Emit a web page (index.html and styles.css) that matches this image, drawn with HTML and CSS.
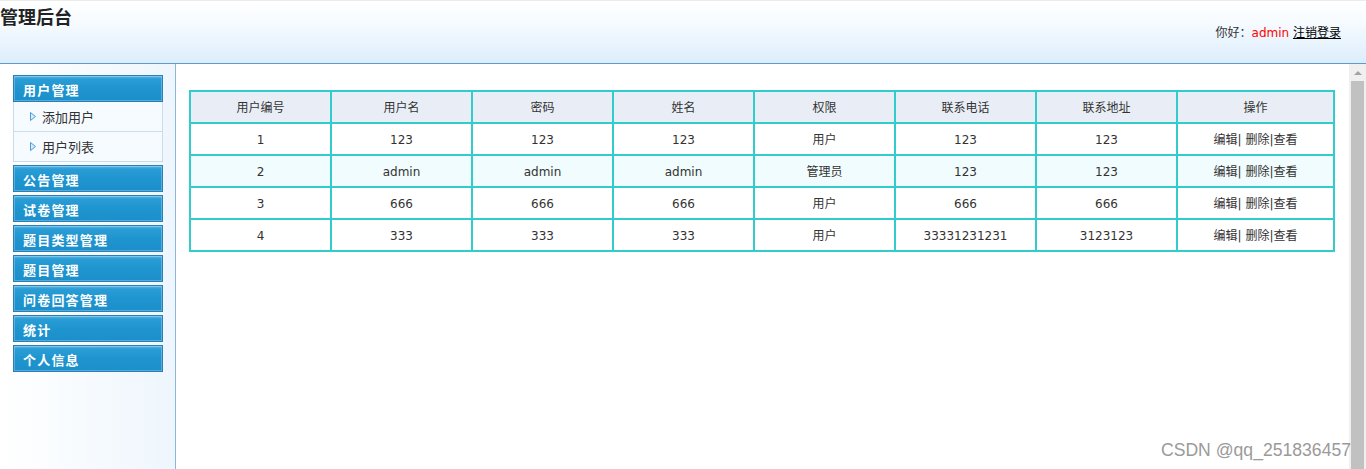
FILE: index.html
```html
<!DOCTYPE html>
<html lang="zh-CN">
<head>
    <meta charset="UTF-8">
    <title>管理后台</title>
    <link rel="stylesheet" href="styles.css">
</head>
<body>
    <div class="top">
        <h1 class="logo">管理后台</h1>
        <div class="user-info">你好：<span class="user-name">admin</span> <a href="#" class="logout">注销登录</a></div>
    </div>

    <div class="main">
        <div class="left">
            <div class="menu-title">用户管理</div>
            <ul class="sub-menu">
                <li><svg width="6" height="9" viewBox="0 0 6 9"><polygon points="0.5,0.5 5.5,4.5 0.5,8.5" fill="#d6ecfa" stroke="#4a9fd8"/></svg>添加用户</li>
                <li><svg width="6" height="9" viewBox="0 0 6 9"><polygon points="0.5,0.5 5.5,4.5 0.5,8.5" fill="#d6ecfa" stroke="#4a9fd8"/></svg>用户列表</li>
            </ul>
            <div class="menu-title">公告管理</div>
            <div class="menu-title">试卷管理</div>
            <div class="menu-title">题目类型管理</div>
            <div class="menu-title">题目管理</div>
            <div class="menu-title">问卷回答管理</div>
            <div class="menu-title">统计</div>
            <div class="menu-title">个人信息</div>
        </div>

        <div class="right">
            <div class="content">
                <table class="list">
                    <tr>
                        <th>用户编号</th>
                        <th>用户名</th>
                        <th>密码</th>
                        <th>姓名</th>
                        <th>权限</th>
                        <th>联系电话</th>
                        <th>联系地址</th>
                        <th class="op">操作</th>
                    </tr>
                    <tr>
                        <td>1</td><td>123</td><td>123</td><td>123</td><td>用户</td><td>123</td><td>123</td>
                        <td>编辑| 删除|查看</td>
                    </tr>
                    <tr class="alt">
                        <td>2</td><td>admin</td><td>admin</td><td>admin</td><td>管理员</td><td>123</td><td>123</td>
                        <td>编辑| 删除|查看</td>
                    </tr>
                    <tr>
                        <td>3</td><td>666</td><td>666</td><td>666</td><td>用户</td><td>666</td><td>666</td>
                        <td>编辑| 删除|查看</td>
                    </tr>
                    <tr>
                        <td>4</td><td>333</td><td>333</td><td>333</td><td>用户</td><td>33331231231</td><td>3123123</td>
                        <td>编辑| 删除|查看</td>
                    </tr>
                </table>
            </div>
            <div class="scrollbar">
                <div class="scroll-up"></div>
                <div class="scroll-thumb"></div>
            </div>
        </div>
    </div>

    <div class="watermark">CSDN @qq_251836457</div>
</body>
</html>
```

FILE: styles.css
```css
body {
    margin: 0;
    padding: 0;
    height: 100vh;
    display: flex;
    flex-direction: column;
    overflow: hidden;
    font-family: "DejaVu Sans", "Noto Sans CJK SC", sans-serif;
    font-size: 12px;
    color: #333;
}

.top {
    height: 62px;
    flex: none;
    border-top: 1px solid #ececec;
    border-bottom: 1px solid #5b9bd1;
    background: linear-gradient(#ffffff 0%, #f6fbff 35%, #dcedfc 100%);
    position: relative;
}

.logo {
    margin: 0;
    padding-top: 3px;
    font-family: "Noto Sans CJK SC", sans-serif;
    font-size: 18px;
    font-weight: bold;
    line-height: 24px;
    color: #222;
}

.user-info {
    position: absolute;
    right: 25px;
    top: 24px;
    font-size: 12px;
    line-height: 16px;
    color: #333;
}

.user-name {
    color: #ff0000;
}

.logout {
    color: #000;
}

.main {
    flex: 1;
    display: flex;
    min-height: 0;
}

.left {
    width: 176px;
    flex: none;
    box-sizing: border-box;
    border-right: 1px solid #8fb6d6;
    background: linear-gradient(to right, #ffffff, #eef6fd);
    padding: 11px 0 0 13px;
}

.menu-title {
    width: 150px;
    height: 27px;
    box-sizing: border-box;
    border: 1px solid #2a7fb8;
    background: linear-gradient(#5cb8e6 0, #2a9dd6 3px, #1f95cf 12px, #1b8fcb 100%);
    box-shadow: inset 0 0 0 1px rgba(255, 255, 255, 0.25);
    color: #fff;
    font-family: "Noto Sans CJK SC", sans-serif;
    font-weight: bold;
    font-size: 13px;
    line-height: 27px;
    padding-left: 9px;
    letter-spacing: 1.2px;
    margin-bottom: 3px;
}

.sub-menu {
    list-style: none;
    margin: -3px 0 3px 0;
    padding: 0;
    width: 150px;
    box-sizing: border-box;
    border: 1px solid #c9dbe8;
    border-top: none;
    background: #f6fbff;
}

.sub-menu li {
    height: 29px;
    line-height: 29px;
    font-family: "Noto Sans CJK SC", sans-serif;
    font-size: 13px;
    color: #333;
    padding-left: 16px;
    display: flex;
    align-items: center;
    gap: 6px;
}

.sub-menu li + li {
    border-top: 1px solid #cfdde9;
}

.right {
    flex: 1;
    display: flex;
    background: #fff;
}

.content {
    flex: 1;
    padding: 26px 14px 0 13px;
}

.list {
    width: 100%;
    border-collapse: collapse;
    border: 2px solid #33cccc;
}

.list th,
.list td {
    border: 2px solid #33cccc;
    text-align: center;
    font-size: 12px;
    line-height: 14px;
    color: #333;
    padding: 2px 0 0 0;
}

.list th {
    height: 28px;
    width: 139px;
    font-weight: normal;
    background: #e9eef6;
}

.list th.op {
    width: auto;
}

.list td {
    height: 28px;
    background: #fff;
}

.list tr.alt td {
    background: #f0fcfd;
}

.scrollbar {
    width: 17px;
    flex: none;
    background: #f0f0f0;
    display: flex;
    flex-direction: column;
    align-items: center;
}

.scroll-up {
    margin-top: 7px;
    width: 0;
    height: 0;
    border-left: 4px solid transparent;
    border-right: 4px solid transparent;
    border-bottom: 4px solid #a3a3a3;
}

.scroll-thumb {
    margin-top: 6px;
    width: 13px;
    flex: 1;
    background: #c1c1c1;
}

.watermark {
    position: absolute;
    right: 15px;
    bottom: 8px;
    font-family: "Liberation Sans", sans-serif;
    font-size: 17.6px;
    color: #9a9a9a;
}
```
